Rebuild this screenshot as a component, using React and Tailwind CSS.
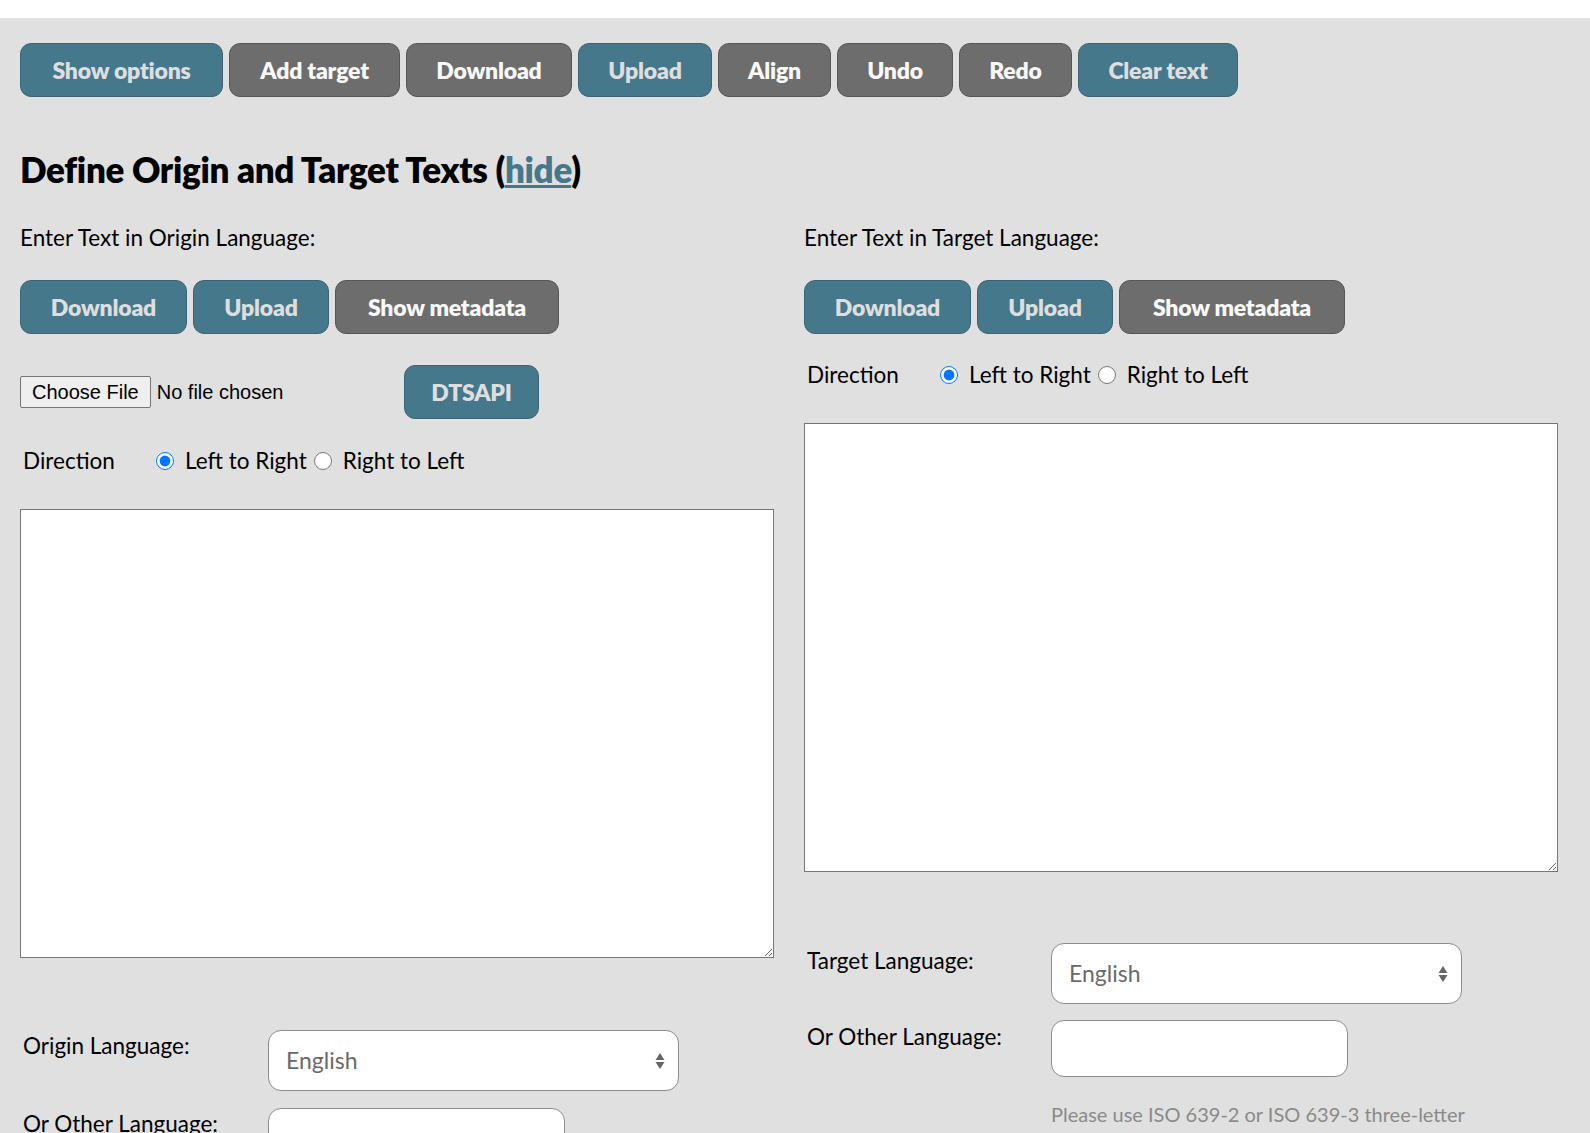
import { useState } from 'react';

const font = "font-['Lato','Noto_Sans',sans-serif]";

const blueBtn = 'bg-[#46788c] text-[#dedede] border-[#3b6475]';
const grayBtn = 'bg-[#6d6d6d] text-[#f8f8f8] border-[#565656]';

function Btn({ label, color, width }) {
    return (
        <button
            className={`${color} ${width} h-[54px] shrink-0 rounded-[11px] border text-[23px] font-extrabold tracking-[-0.2px] flex items-center justify-center`}
        >
            {label}
        </button>
    );
}

function Direction({ name }) {
    const [dir, setDir] = useState('ltr');
    return (
        <div className="flex items-center h-[28px] text-[22.5px] text-black">
            <span className="ml-[3px] w-[133px]">Direction</span>
            <input
                type="radio"
                name={name}
                checked={dir === 'ltr'}
                onChange={() => setDir('ltr')}
                className="m-0 w-[18px] h-[18px] accent-[#0075ff]"
            />
            <span className="ml-[11px] mr-[7px]">Left to Right</span>
            <input
                type="radio"
                name={name}
                checked={dir === 'rtl'}
                onChange={() => setDir('rtl')}
                className="m-0 w-[18px] h-[18px] accent-[#0075ff]"
            />
            <span className="ml-[11px]">Right to Left</span>
        </div>
    );
}

function LangSelect() {
    return (
        <div className="w-[411px] h-[61px] bg-white border border-[#8d8d8d] rounded-[13px] flex items-center justify-between pl-[17px] pr-[13px]">
            <span className="text-[23px] text-[#6a6a6a]">English</span>
            <svg width="10" height="18" viewBox="0 0 10 18">
                <path d="M5 1 L9.5 8 L0.5 8 Z" fill="#666" />
                <path d="M5 17 L9.5 10 L0.5 10 Z" fill="#666" />
            </svg>
        </div>
    );
}

function OtherInput() {
    return <input type="text" className="w-[297px] h-[57px] bg-white border border-[#8d8d8d] rounded-[13px] px-3 outline-none" />;
}

function TextBox() {
    return (
        <textarea className="block w-[754px] h-[449px] bg-white border border-[#767676] resize" />
    );
}

export default function App() {
    const toolbar = [
        { label: 'Show options', color: blueBtn, width: 'w-[203px]' },
        { label: 'Add target', color: grayBtn, width: 'w-[171px]' },
        { label: 'Download', color: grayBtn, width: 'w-[166px]' },
        { label: 'Upload', color: blueBtn, width: 'w-[134px]' },
        { label: 'Align', color: grayBtn, width: 'w-[113px]' },
        { label: 'Undo', color: grayBtn, width: 'w-[116px]' },
        { label: 'Redo', color: grayBtn, width: 'w-[113px]' },
        { label: 'Clear text', color: blueBtn, width: 'w-[160px]' }
    ];

    return (
        <div className={`${font} bg-white pt-[18px] text-black`}>
            <div className="bg-[#e0e0e0] min-h-[1115px] px-[20px] pt-[25px] pb-10">
                {/* Top toolbar */}
                <div className="flex gap-[6px]">
                    {toolbar.map((b) => (
                        <Btn key={b.label} {...b} />
                    ))}
                </div>

                <h2 className="mt-[51px] text-[35px] leading-[42px] font-extrabold tracking-[-0.3px]">
                    Define Origin and Target Texts (<a href="#" className="text-[#46788c] underline">hide</a>)
                </h2>

                <div className="mt-[34px] grid grid-cols-[754px_754px] gap-x-[30px] items-start">
                    {/* Origin column */}
                    <div className="flex flex-col">
                        <p className="text-[22.5px] leading-[28px]">Enter Text in Origin Language:</p>
                        <div className="mt-[28px] flex gap-[6px]">
                            <Btn label="Download" color={blueBtn} width="w-[167px]" />
                            <Btn label="Upload" color={blueBtn} width="w-[136px]" />
                            <Btn label="Show metadata" color={grayBtn} width="w-[224px]" />
                        </div>
                        <div className="mt-[31px] flex items-center h-[54px]">
                            <div className="w-[384px] flex items-center font-['Liberation_Sans',Arial,sans-serif] text-[20px]">
                                <span className="h-[32px] px-[11px] flex items-center bg-[#efefef] border border-[#767676] rounded-[2px]">
                                    Choose File
                                </span>
                                <span className="ml-[6px]">No file chosen</span>
                            </div>
                            <Btn label="DTSAPI" color={blueBtn} width="w-[135px]" />
                        </div>
                        <div className="mt-[28px]">
                            <Direction name="origin-dir" />
                        </div>
                        <div className="mt-[34px]">
                            <TextBox />
                        </div>
                        <div className="mt-[72px] flex items-start">
                            <span className="ml-[3px] w-[245px] mt-[2px] text-[22.5px] leading-[28px]">Origin Language:</span>
                            <LangSelect />
                        </div>
                        <div className="mt-[17px] flex items-start">
                            <span className="ml-[3px] w-[245px] mt-[2px] text-[22.5px] leading-[28px]">Or Other Language:</span>
                            <OtherInput />
                        </div>
                    </div>

                    {/* Target column */}
                    <div className="flex flex-col">
                        <p className="text-[22.5px] leading-[28px]">Enter Text in Target Language:</p>
                        <div className="mt-[28px] flex gap-[6px]">
                            <Btn label="Download" color={blueBtn} width="w-[167px]" />
                            <Btn label="Upload" color={blueBtn} width="w-[136px]" />
                            <Btn label="Show metadata" color={grayBtn} width="w-[226px]" />
                        </div>
                        <div className="mt-[27px]">
                            <Direction name="target-dir" />
                        </div>
                        <div className="mt-[34px]">
                            <TextBox />
                        </div>
                        <div className="mt-[71px] flex items-start">
                            <span className="ml-[3px] w-[244px] mt-[4px] text-[22.5px] leading-[28px]">Target Language:</span>
                            <LangSelect />
                        </div>
                        <div className="mt-[16px] flex items-start">
                            <span className="ml-[3px] w-[244px] mt-[3px] text-[22.5px] leading-[28px]">Or Other Language:</span>
                            <OtherInput />
                        </div>
                        <p className="mt-[24px] ml-[247px] w-[430px] text-[20px] leading-[26px] text-[#8a8a8a]">
                            Please use ISO 639-2 or ISO 639-3 three-letter language codes.
                        </p>
                    </div>
                </div>
            </div>
        </div>
    );
}
